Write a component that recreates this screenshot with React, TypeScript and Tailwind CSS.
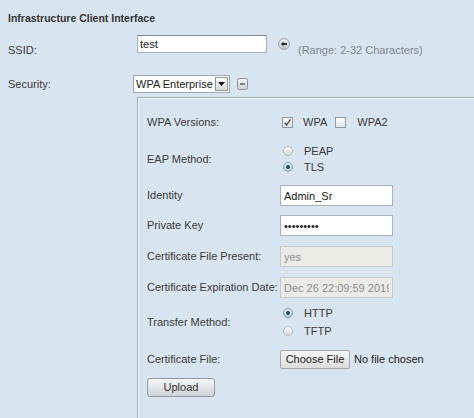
import React from "react";

function Check({ checked }: { checked?: boolean }) {
  return (
    <span className="flex h-[11px] w-[11px] shrink-0 items-center justify-center border border-[#8e99a4] bg-gradient-to-b from-white to-[#dde1e6]">
      {checked && (
        <svg width="9" height="9" viewBox="0 0 9 9">
          <path d="M1.6 4.6 L3.6 7 L7.4 1.4" fill="none" stroke="#3a4047" strokeWidth="1.3" />
        </svg>
      )}
    </span>
  );
}

function Radio({ checked }: { checked?: boolean }) {
  return checked ? (
    <span className="flex h-[10px] w-[10px] shrink-0 items-center justify-center rounded-full border border-[#7c98aa] bg-gradient-to-b from-[#e4eef4] to-[#b9cfdc]">
      <span className="h-[4px] w-[4px] rounded-full bg-[#24495c]" />
    </span>
  ) : (
    <span className="block h-[10px] w-[10px] shrink-0 rounded-full border border-[#b2bac2] bg-gradient-to-b from-[#f7f8f9] to-[#d6dade]" />
  );
}

function Field({ value, type = "text", disabled }: { value: string; type?: string; disabled?: boolean }) {
  return (
    <input
      readOnly
      type={type}
      value={value}
      disabled={disabled}
      className="h-[21px] w-[113px] border border-[#a9b1b9] bg-white px-[3px] font-['Liberation_Sans',Arial,sans-serif] text-[11px] text-[#222] outline-none disabled:border-[#c3c8cd] disabled:bg-[#ebebe5] disabled:text-[#8d8d8d]"
    />
  );
}

function Row({ label, mt, children }: { label: string; mt: string; children: React.ReactNode }) {
  return (
    <div className={`flex h-[21px] items-center ${mt}`}>
      <div className="w-[133px] shrink-0">{label}</div>
      {children}
    </div>
  );
}

export default function App() {
  return (
    <div className="h-[418px] w-[474px] overflow-hidden bg-[#d8e4ef] pl-[8px] font-['Liberation_Sans',Arial,sans-serif] text-[11px] leading-[13px] text-[#3a3a3a]">
      <h1 className="pt-[12px] text-[10.5px] font-bold leading-[13px] text-[#333]">
        Infrastructure Client Interface
      </h1>

      {/* SSID */}
      <div className="mt-[10px] flex h-[18px] items-start">
        <div className="mt-[9px] w-[129px] shrink-0">SSID:</div>
        <input
          readOnly
          value="test"
          className="h-[18px] w-[130px] border border-[#a9b1b9] border-t-[#7d858d] bg-white px-[2px] font-['Liberation_Sans',Arial,sans-serif] text-[11px] text-[#222] outline-none"
        />
        <svg className="ml-[11px] mt-[3px]" width="12" height="12" viewBox="0 0 12 12">
          <defs>
            <linearGradient id="arr" x1="0" y1="0" x2="0" y2="1">
              <stop offset="0" stopColor="#f5f5f5" />
              <stop offset="1" stopColor="#c6c8ca" />
            </linearGradient>
          </defs>
          <circle cx="6" cy="6" r="5.4" fill="url(#arr)" stroke="#9b9fa3" />
          <path d="M2.8 6 L5.6 3.4 V5.1 H9 V6.9 H5.6 V8.6 Z" fill="#2f3235" />
        </svg>
        <span className="ml-[8px] mt-[9px] text-[#7f8790]">(Range: 2-32 Characters)</span>
      </div>

      {/* Security */}
      <div className="mt-[22px] flex h-[18px] items-center">
        <div className="w-[125px] shrink-0">Security:</div>
        <div className="flex h-[18px] w-[97px] items-center border border-[#9ea6ae] bg-white">
          <span className="flex-1 pl-[2px] text-[#222]">WPA Enterprise</span>
          <span className="mr-[1px] flex h-[14px] w-[13px] items-center justify-center border border-[#8f969d] bg-gradient-to-b from-[#fbfbfb] to-[#d6d8da]">
            <svg width="7" height="4" viewBox="0 0 7 4">
              <path d="M0 0 H7 L3.5 4 Z" fill="#111" />
            </svg>
          </span>
        </div>
        <svg className="ml-[7px]" width="11" height="12" viewBox="0 0 11 12">
          <defs>
            <linearGradient id="mn" x1="0" y1="0" x2="0" y2="1">
              <stop offset="0" stopColor="#f6f6f6" />
              <stop offset="1" stopColor="#cfd1d3" />
            </linearGradient>
          </defs>
          <rect x="0.5" y="0.5" width="10" height="11" rx="2" fill="url(#mn)" stroke="#8b8f93" />
          <rect x="3" y="5.4" width="5" height="1.2" fill="#3d4043" />
        </svg>
      </div>

      {/* Enterprise settings panel */}
      <div className="ml-[129px] mt-[4px] min-h-[321px] border-l border-t border-[#a5afb9] pl-[9px] shadow-[inset_1px_1px_0_#eef3f8]">
        <div className="mt-[14px] flex h-[20px] items-center">
          <div className="w-[133px] shrink-0">WPA Versions:</div>
          <span className="ml-[2px]">
            <Check checked />
          </span>
          <span className="ml-[10px]">WPA</span>
          <span className="ml-[8px]">
            <Check />
          </span>
          <span className="ml-[11px]">WPA2</span>
        </div>

        <div className="mt-[11px] flex items-center">
          <div className="w-[133px] shrink-0">EAP Method:</div>
          <div className="flex flex-col">
            <div className="flex h-[16px] items-center">
              <span className="ml-[3px]">
                <Radio />
              </span>
              <span className="ml-[11px]">PEAP</span>
            </div>
            <div className="flex h-[16px] items-center">
              <span className="ml-[3px]">
                <Radio checked />
              </span>
              <span className="ml-[11px]">TLS</span>
            </div>
          </div>
        </div>

        <Row label="Identity" mt="mt-[10px]">
          <Field value="Admin_Sr" />
        </Row>
        <Row label="Private Key" mt="mt-[9px]">
          <Field value="*********" type="password" />
        </Row>
        <Row label="Certificate File Present:" mt="mt-[10px]">
          <Field value="yes" disabled />
        </Row>
        <Row label="Certificate Expiration Date:" mt="mt-[10px]">
          <Field value="Dec 26 22:09:59 2019 (GMT)" disabled />
        </Row>

        <div className="mt-[6px] flex items-center">
          <div className="w-[133px] shrink-0">Transfer Method:</div>
          <div className="flex flex-col">
            <div className="flex h-[18px] items-center">
              <span className="ml-[3px]">
                <Radio checked />
              </span>
              <span className="ml-[11px]">HTTP</span>
            </div>
            <div className="flex h-[18px] items-center">
              <span className="ml-[3px]">
                <Radio />
              </span>
              <span className="ml-[11px]">TFTP</span>
            </div>
          </div>
        </div>

        <div className="mt-[10px] flex h-[19px] items-center">
          <div className="w-[133px] shrink-0">Certificate File:</div>
          <button className="h-[19px] w-[70px] rounded-[2px] border border-[#a3a6a9] bg-gradient-to-b from-[#f7f7f7] to-[#dcdcdc] text-[11px] text-[#222]">
            Choose File
          </button>
          <span className="ml-[4px] text-[#222]">No file chosen</span>
        </div>

        <button className="mt-[9px] h-[19px] w-[68px] rounded-[3px] border border-[#8e9aa6] bg-gradient-to-b from-[#f5f6f7] to-[#cfd3d7] text-[11px] text-[#333]">
          Upload
        </button>
      </div>
    </div>
  );
}
